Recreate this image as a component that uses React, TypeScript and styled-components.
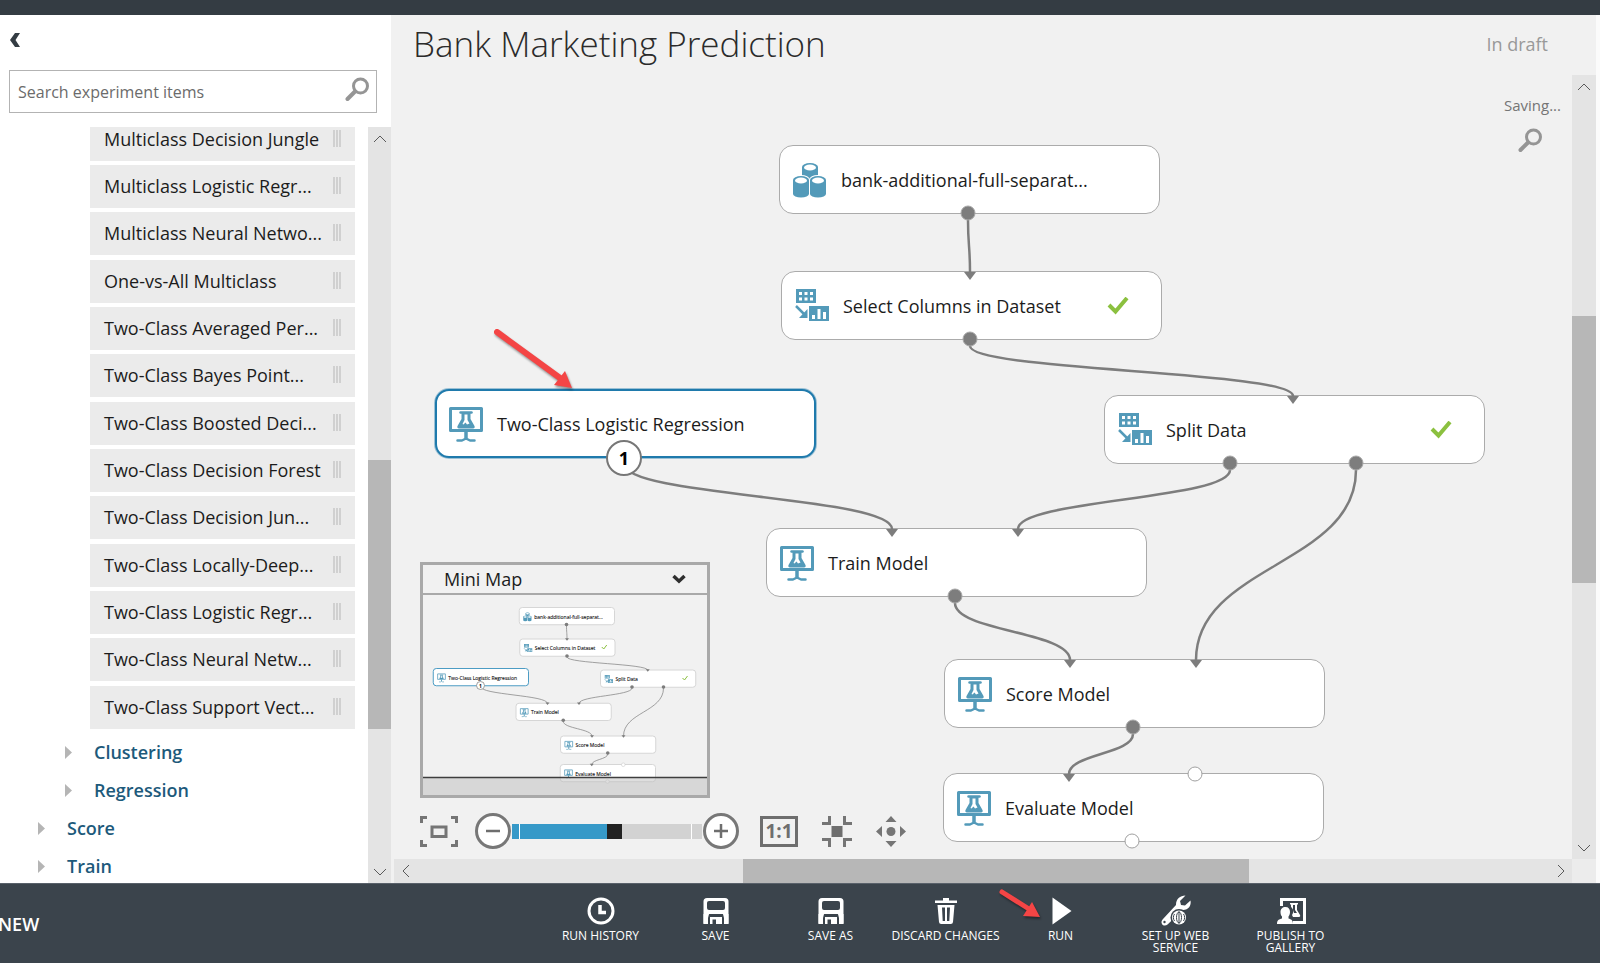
import React, { useState } from "react";
import styled, { createGlobalStyle, css } from "styled-components";

const GlobalStyle = createGlobalStyle`
  *, *::before, *::after { box-sizing: border-box; }
  body {
    margin: 0;
    background: #ffffff;
    color: #1c1c1c;
    font-family: "Open Sans", "Noto Sans", sans-serif;
    font-size: 18px;
  }
  button { font: inherit; color: inherit; background: none; border: 0; padding: 0; cursor: pointer; }
  ul { list-style: none; margin: 0; padding: 0; }
  svg { display: block; flex: none; }
`;

const BLUE = "#539ab9";
const GREY = "#7d7d7d";

/* ---------- data ---------- */

const MODULES = [
  "Multiclass Decision Jungle",
  "Multiclass Logistic Regr...",
  "Multiclass Neural Netwo...",
  "One-vs-All Multiclass",
  "Two-Class Averaged Per...",
  "Two-Class Bayes Point...",
  "Two-Class Boosted Deci...",
  "Two-Class Decision Forest",
  "Two-Class Decision Jun...",
  "Two-Class Locally-Deep...",
  "Two-Class Logistic Regr...",
  "Two-Class Neural Netw...",
  "Two-Class Support Vect...",
];

const CATEGORIES = [
  { name: "Clustering", depth: 1 },
  { name: "Regression", depth: 1 },
  { name: "Score", depth: 0 },
  { name: "Train", depth: 0 },
];

type IconKind = "data" | "transform" | "model";

interface GraphNode {
  id: string;
  label: string;
  icon: IconKind;
  x: number;
  y: number;
  done?: boolean;
  selected?: boolean;
}

const NODE_W = 381;
const NODE_H = 69;

const NODES: GraphNode[] = [
  { id: "bank", label: "bank-additional-full-separat...", icon: "data", x: 385, y: 70 },
  { id: "select", label: "Select Columns in Dataset", icon: "transform", x: 387, y: 196, done: true },
  { id: "logistic", label: "Two-Class Logistic Regression", icon: "model", x: 41, y: 314, selected: true },
  { id: "split", label: "Split Data", icon: "transform", x: 710, y: 320, done: true },
  { id: "train", label: "Train Model", icon: "model", x: 372, y: 453 },
  { id: "score", label: "Score Model", icon: "model", x: 550, y: 584 },
  { id: "evaluate", label: "Evaluate Model", icon: "model", x: 549, y: 698 },
];

type Point = [number, number];

const at = (id: string, side: "in" | "out", offset: number): Point => {
  const n = NODES.find((m) => m.id === id)!;
  return [n.x + offset, side === "in" ? n.y + 1 : n.y + NODE_H - 1];
};

const EDGES: [Point, Point][] = [
  [at("bank", "out", 189), at("select", "in", 189)],
  [at("select", "out", 189), at("split", "in", 189)],
  [at("logistic", "out", 189), at("train", "in", 126)],
  [at("split", "out", 126), at("train", "in", 252)],
  [at("split", "out", 252), at("score", "in", 252)],
  [at("train", "out", 189), at("score", "in", 126)],
  [at("score", "out", 189), at("evaluate", "in", 126)],
];

const OPEN_PORTS: Point[] = [at("evaluate", "in", 252), at("evaluate", "out", 189)];

const edgePath = ([[x1, y1], [x2, y2]]: [Point, Point], lead = 7) => {
  const start = y1 + lead;
  const mid = (start + y2) / 2;
  return `M${x1} ${y1}V${start}C${x1} ${mid} ${x2} ${mid} ${x2} ${y2}`;
};

/* ---------- icons ---------- */

const DataShapes = () => (
  <g>
    {[
      [9, 0],
      [0, 13],
      [17, 13],
    ].map(([x, y]) => (
      <g key={`${x}-${y}`}>
        <path
          d={`M${x} ${y + 4}a8 4 0 0 1 16 0v14a8 3.500 0 0 1-16 0z`}
          fill={BLUE}
          stroke="#fff"
          strokeWidth="2"
          paintOrder="stroke"
        />
        <ellipse cx={x + 8} cy={y + 4.5} rx="6" ry="3" fill="#fff" />
      </g>
    ))}
  </g>
);

const TransformShapes = () => (
  <g>
    <path d="M1 0h20v14H1z" fill={BLUE} />
    <path d="M4 3h3v3H4zM9.500 3h3v3h-3zM15 3h3v3h-3zM4 8.500h3v3H4zM9.500 8.500h3v3h-3zM15 8.500h3v3h-3z" fill="#fff" />
    <path d="M14 17h20v15H14z" fill={BLUE} />
    <path d="M17 26h3v4h-3zM22.500 20h3v10h-3zM28 23h3v7h-3z" fill="#fff" />
    <path d="M1 17l9 9" stroke={BLUE} strokeWidth="2.500" />
    <path d="M12.500 20v9H4z" fill={BLUE} />
  </g>
);

const ModelShapes = () => (
  <g>
    <path d="M1.500 1.500h31v22h-31z" fill="#fff" stroke={BLUE} strokeWidth="3" strokeLinejoin="round" />
    <path d="M11.500 5.500h11" stroke={BLUE} strokeWidth="2.500" strokeLinecap="round" />
    <path d="M12.500 6h9v6l4 7c.5 1.500 0 2.500-1.500 2.500H10c-1.500 0-2-1-1.500-2.500l4-7z" fill={BLUE} />
    <path d="M15.500 7.500h3V13l2 3.500-2.500 1-1.500-2-2 2-1-.5 2-4z" fill="#fff" />
    <path d="M17 24v7" stroke={BLUE} strokeWidth="3.500" />
    <path d="M8.500 33.500h4.500l4-2 4 2h4.500" fill="none" stroke={BLUE} strokeWidth="2.500" strokeLinecap="round" strokeLinejoin="round" />
  </g>
);

const SHAPES: Record<IconKind, React.FC> = {
  data: DataShapes,
  transform: TransformShapes,
  model: ModelShapes,
};

const Magnifier = () => (
  <svg width="25" height="25" viewBox="0 0 25 25" fill="none" stroke="#959595" aria-hidden="true">
    <circle cx="15.500" cy="9" r="7" strokeWidth="3" />
    <path d="M10 14.500L2.500 22" strokeWidth="4" strokeLinecap="round" />
  </svg>
);

const Chevron = ({ d }: { d: string }) => (
  <svg width="14" height="14" viewBox="0 0 14 14" fill="none" stroke="#5a5a5a" strokeWidth="1" aria-hidden="true">
    <path d={d} />
  </svg>
);

const ARROWS = {
  up: "M1 10l6-6 6 6",
  down: "M1 4l6 6 6-6",
  left: "M10 1L4 7l6 6",
  right: "M4 1l6 6-6 6",
};

const CheckMark = () => (
  <svg width="22" height="19" viewBox="0 0 22 19" fill="none" stroke="#8bc03f" strokeWidth="4" aria-label="Completed">
    <path d="M2 8l6.500 6.500L20 1" />
  </svg>
);

const Grip = () => (
  <svg width="8" height="17" viewBox="0 0 8 17" fill="#d0d0d0" aria-hidden="true">
    <path d="M0 0h2v17H0zM3 0h2v17H3zM6 0h2v17H6z" />
  </svg>
);

/* ---------- scrollbars ---------- */

const BarTrack = styled.div<{ $horizontal?: boolean }>`
  display: flex;
  flex-direction: ${(p) => (p.$horizontal ? "row" : "column")};
  flex: none;
  min-width: 23px;
  min-height: 23px;
  background: #e4e4e4;
`;

const BarButton = styled.button`
  display: flex;
  flex: 0 0 23px;
  align-items: center;
  justify-content: center;
`;

const BarPart = styled.div<{ $share: number; $thumb?: boolean }>`
  flex: ${(p) => p.$share} 1 0;
  background: ${(p) => (p.$thumb ? "#b7b7b7" : "transparent")};
`;

interface ScrollBarProps {
  horizontal?: boolean;
  before: number;
  size: number;
  after: number;
}

const ScrollBar = ({ horizontal, before, size, after }: ScrollBarProps) => (
  <BarTrack $horizontal={horizontal}>
    <BarButton type="button" aria-label={horizontal ? "Scroll left" : "Scroll up"}>
      <Chevron d={horizontal ? ARROWS.left : ARROWS.up} />
    </BarButton>
    <BarPart $share={before} />
    <BarPart $share={size} $thumb />
    <BarPart $share={after} />
    <BarButton type="button" aria-label={horizontal ? "Scroll right" : "Scroll down"}>
      <Chevron d={horizontal ? ARROWS.right : ARROWS.down} />
    </BarButton>
  </BarTrack>
);

/* ---------- page frame ---------- */

const Page = styled.div`
  display: grid;
  grid-template: 15px minmax(0, 1fr) 80px / 391px minmax(0, 1fr);
  height: 100vh;
  overflow: hidden;
`;

const TopBar = styled.header`
  grid-column: 1 / -1;
  background: #343c43;
`;

/* ---------- sidebar ---------- */

const Sidebar = styled.aside`
  display: flex;
  flex-direction: column;
  min-height: 0;
  background: #ffffff;
`;

const CollapseButton = styled.button`
  align-self: flex-start;
  display: flex;
  align-items: center;
  height: 49px;
  margin: 0 0 6px 9px;
`;

const SearchBox = styled.label`
  display: flex;
  align-items: center;
  height: 43px;
  margin: 0 14px 14px 9px;
  padding: 0 6px 4px 8px;
  border: 1px solid #b3b3b3;
`;

const SearchInput = styled.input`
  flex: 1;
  min-width: 0;
  padding: 4px 0 0;
  border: 0;
  outline: 0;
  background: none;
  font: inherit;
  font-size: 16px;
  color: #333333;
  &::placeholder { color: #6b6b6b; opacity: 1; }
`;

const TreeArea = styled.div`
  display: flex;
  flex: 1;
  min-height: 0;
`;

const Tree = styled.nav`
  flex: 1;
  min-width: 0;
  overflow: hidden;
`;

const ModuleList = styled.ul`
  margin: -9px 13px 3px 90px;
`;

const ModuleItem = styled.li`
  display: flex;
  align-items: center;
  justify-content: space-between;
  height: 43px;
  margin-bottom: 4px;
  padding: 0 14px 2px;
  background: #ebebeb;
  white-space: nowrap;
  &:nth-child(3n) { margin-bottom: 5px; }
`;

const CategoryButton = styled.button<{ $depth: number }>`
  display: flex;
  align-items: center;
  gap: 22px;
  height: 38px;
  padding-left: ${(p) => 38 + p.$depth * 27}px;
  color: #1d5a7b;
  font-weight: 600;
`;

/* ---------- workspace ---------- */

const Workspace = styled.main`
  display: grid;
  grid-template: 60px minmax(0, 1fr) 24px / minmax(0, 1fr) 24px;
  min-height: 0;
  padding-left: 3px;
  border-right: 4px solid #fbfbfb;
  background: #f1f1f1;
`;

const TitleRow = styled.div`
  grid-column: 1 / -1;
  display: flex;
  align-items: center;
  justify-content: space-between;
  padding: 0 48px 3px 19px;
`;

const Title = styled.h1`
  margin: 0;
  font-size: 35px;
  line-height: 48px;
  font-weight: 300;
  color: #2b2b2b;
`;

const Status = styled.span`
  color: #999999;
`;

const Canvas = styled.section`
  position: relative;
  overflow: hidden;
`;

const Corner = styled.div`
  background: #ececec;
`;

const EdgeLayer = styled.svg`
  position: absolute;
  inset: 0;
  width: 100%;
  height: 100%;
  pointer-events: none;
`;

const NodeBox = styled.div<{ $x: number; $y: number; $selected?: boolean }>`
  position: absolute;
  left: ${(p) => p.$x}px;
  top: ${(p) => p.$y}px;
  display: flex;
  align-items: center;
  width: ${NODE_W}px;
  height: ${NODE_H}px;
  padding: 2px 32px 0 13px;
  border: 1px solid #ababab;
  border-radius: 14px;
  background: #ffffff;
  white-space: nowrap;
  ${(p) =>
    p.$selected &&
    css`
      border: 2px solid #1f7aac;
      padding-left: 12px;
      box-shadow: 0 0 0 1px #1f7aac66;
    `}
`;

const NodeLabel = styled.span`
  flex: 1;
  margin: 0 0 2px 13px;
`;

const BadgeAnchor = styled.div<{ $x: number; $y: number }>`
  position: absolute;
  left: ${(p) => p.$x + 189}px;
  top: ${(p) => p.$y + NODE_H}px;
`;

const PortBadge = styled.span`
  display: flex;
  align-items: center;
  justify-content: center;
  width: 36px;
  height: 36px;
  margin: -18px;
  border: 2px solid #777777;
  border-radius: 50%;
  background: #ffffff;
  color: #000000;
  font-weight: 700;
`;

const Saving = styled.div`
  position: absolute;
  top: 19px;
  right: 11px;
  display: flex;
  flex-direction: column;
  align-items: flex-start;
  gap: 12px;
  font-size: 15px;
  line-height: 22px;
  color: #757575;
  svg { margin-left: 14px; }
`;

const Callout = styled.svg<{ $x: number; $y: number }>`
  position: absolute;
  left: ${(p) => p.$x}px;
  top: ${(p) => p.$y}px;
  overflow: visible;
  filter: drop-shadow(1px 2px 1px #00000066);
  pointer-events: none;
`;

/* ---------- mini map and zoom tools ---------- */

const CanvasTools = styled.div`
  position: absolute;
  left: 26px;
  bottom: 10px;
  display: flex;
  flex-direction: column;
  align-items: flex-start;
  gap: 15px;
`;

const MiniMapPanel = styled.section`
  width: 290px;
  border: 3px solid #a9a9a9;
  background: #f1f1f1;
`;

const MiniMapHeader = styled.header`
  display: flex;
  align-items: center;
  justify-content: space-between;
  height: 30px;
  padding: 0 21px 0 21px;
  border-bottom: 2px solid #a9a9a9;
`;

const MiniMapTitle = styled.h2`
  margin: 0;
  font-size: 18px;
  line-height: 26px;
  font-weight: 400;
`;

const ZoomBar = styled.div`
  display: flex;
  align-items: center;
  height: 36px;
`;

const RoundButton = styled.button<{ $gap?: number }>`
  display: flex;
  align-items: center;
  justify-content: center;
  width: 36px;
  height: 36px;
  margin-left: ${(p) => p.$gap ?? 0}px;
  border: 3px solid #777777;
  border-radius: 50%;
  background: #ffffff;
`;

const ToolButton = styled.button`
  margin-left: 24px;
`;

const ActualSize = styled.button`
  width: 38px;
  height: 31px;
  margin-left: 21px;
  border: 3px solid #6e6e6e;
  color: #6e6e6e;
  font-size: 19px;
  line-height: 24px;
  font-weight: 700;
`;

const sliderTrack = css`
  height: 15px;
  background:
    linear-gradient(#fff, #fff) 7px 0 / 1px 15px no-repeat,
    linear-gradient(#fff, #fff) calc(100% - 10px) 0 / 1px 15px no-repeat,
    linear-gradient(to right, #3699c8 54%, #d2d2d2 54%);
`;

const sliderThumb = css`
  width: 15px;
  height: 15px;
  border: 0;
  border-radius: 0;
  background: #222222;
`;

const ZoomSlider = styled.input`
  appearance: none;
  width: 190px;
  height: 15px;
  margin: 0 1px;
  background: none;
  &::-webkit-slider-runnable-track { ${sliderTrack} }
  &::-moz-range-track { ${sliderTrack} }
  &::-webkit-slider-thumb { appearance: none; ${sliderThumb} }
  &::-moz-range-thumb { ${sliderThumb} }
`;

const MAP_SCALE = 0.25;
const mapPoint = ([x, y]: Point): Point => [x * MAP_SCALE, y * MAP_SCALE - 5];

const MiniMap = () => (
  <MiniMapPanel aria-label="Mini Map">
    <MiniMapHeader>
      <MiniMapTitle>Mini Map</MiniMapTitle>
      <button type="button" aria-label="Collapse mini map">
        <svg width="14" height="10" viewBox="0 0 14 10" fill="none" stroke="#2f2f2f" strokeWidth="3.500">
          <path d="M1.500 2L7 7.200 12.500 2" />
        </svg>
      </button>
    </MiniMapHeader>
    <svg width="284" height="200" viewBox="0 0 284 200" role="img" aria-label="Overview of the experiment">
      {NODES.map((n) => {
        const [x, y] = mapPoint([n.x, n.y]);
        const Shapes = SHAPES[n.icon];
        return (
          <g key={n.id}>
            <rect
              x={x}
              y={y}
              width={NODE_W * MAP_SCALE}
              height={NODE_H * MAP_SCALE}
              rx="3"
              fill="#fff"
              stroke={n.selected ? "#4c9cc4" : "#d6d6d6"}
            />
            <g transform={`translate(${x + 4} ${y + 5}) scale(.25)`}>
              <Shapes />
            </g>
            <text x={x + 15} y={y + 11} fontSize="5" fill="#111" stroke="#111" strokeWidth=".1">
              {n.label}
            </text>
            {n.done && (
              <path d={`M${x + 82} ${y + 8}l2 2 3-4`} fill="none" stroke="#8bc03f" strokeWidth="1" />
            )}
          </g>
        );
      })}
      {EDGES.map(([from, to], i) => {
        const a = mapPoint(from);
        const b = mapPoint(to);
        return (
          <g key={i}>
            <path d={edgePath([a, b], 1)} fill="none" stroke="#8a8a8a" strokeWidth=".8" />
            <circle cx={a[0]} cy={a[1]} r="1.800" fill={GREY} />
            <path d={`M${b[0] - 2} ${b[1] - 1}h4l-2 2.500z`} fill={GREY} />
          </g>
        );
      })}
      {OPEN_PORTS.map((p, i) => {
        const [x, y] = mapPoint(p);
        return <circle key={i} cx={x} cy={y} r="1.800" fill="#fff" stroke="#ccc" strokeWidth=".6" />;
      })}
      <circle cx="57.500" cy="90.500" r="4" fill="#fff" stroke="#888" strokeWidth=".8" />
      <text x="57.500" y="92.500" fontSize="5" fontWeight="700" textAnchor="middle">
        1
      </text>
      <path d="M0 183h284v17H0z" fill="#bdbdbd" opacity=".5" />
      <path d="M0 182.500h284" stroke="#3e3e3e" strokeWidth="1.500" />
    </svg>
  </MiniMapPanel>
);

const ZoomTools = () => {
  const [zoom, setZoom] = useState(54);
  return (
    <ZoomBar>
      <button type="button" aria-label="Zoom to fit">
        <svg width="38" height="31" viewBox="0 0 38 31" fill="none" stroke="#757575">
          <path d="M1.500 7V1.500H7M31 1.500h5.500V7M36.500 24v5.500H31M7 29.500H1.500V24" strokeWidth="3" />
          <path d="M12 11h14v9.500H12z" strokeWidth="3" />
        </svg>
      </button>
      <RoundButton type="button" aria-label="Zoom out" $gap={17}>
        <svg width="14" height="14" viewBox="0 0 14 14" stroke="#6e6e6e" strokeWidth="2.500">
          <path d="M0 7h14" />
        </svg>
      </RoundButton>
      <ZoomSlider
        type="range"
        min="0"
        max="100"
        aria-label="Zoom level"
        value={zoom}
        onChange={(e) => setZoom(Number(e.target.value))}
      />
      <RoundButton type="button" aria-label="Zoom in">
        <svg width="14" height="14" viewBox="0 0 14 14" stroke="#6e6e6e" strokeWidth="2.500">
          <path d="M0 7h14M7 0v14" />
        </svg>
      </RoundButton>
      <ActualSize type="button">1:1</ActualSize>
      <ToolButton type="button" aria-label="Center on canvas">
        <svg width="30" height="31" viewBox="0 0 30 31" fill="none" stroke="#757575" strokeWidth="3">
          <path d="M7.500 0v7.500H0M22.500 0v7.500H30M0 23.500h7.500V31M30 23.500h-7.500V31" />
          <path d="M9.500 10h11v11h-11z" fill="#6e6e6e" stroke="none" />
        </svg>
      </ToolButton>
      <ToolButton type="button" aria-label="Pan">
        <svg width="30" height="31" viewBox="0 0 30 31" fill="#757575">
          <path d="M9.500 6L15 0l5.500 6zM9.500 25L15 31l5.500-6zM6 10L0 15.500 6 21zM24 10l6 5.500-6 5.500z" />
          <circle cx="15" cy="15.500" r="4.500" />
        </svg>
      </ToolButton>
    </ZoomBar>
  );
};

/* ---------- command bar ---------- */

const CommandBar = styled.footer`
  grid-column: 1 / -1;
  display: flex;
  border-top: 1px solid #59616a;
  background: #3b444c;
  color: #ffffff;
`;

const NewButton = styled.button`
  flex: 0 1 545px;
  margin-left: -2px;
  text-align: left;
  font-weight: 600;
`;

const Command = styled.button`
  position: relative;
  display: flex;
  flex: 0 0 115px;
  flex-direction: column;
  align-items: center;
  gap: 5px;
  padding-top: 13px;
  font-size: 12px;
  line-height: 12px;
`;

const CommandText = styled.span<{ $narrow?: boolean }>`
  max-width: ${(p) => (p.$narrow ? "80px" : "none")};
  white-space: ${(p) => (p.$narrow ? "normal" : "nowrap")};
`;

const CommandIcon = ({ children }: { children: React.ReactNode }) => (
  <svg width="32" height="28" viewBox="0 0 32 28" fill="#fff" overflow="visible" aria-hidden="true">
    {children}
  </svg>
);

const Disk = () => (
  <CommandIcon>
    <path
      fillRule="evenodd"
      d="M7 1h18q3.500 0 3.500 3.500V27H25v-7.500Q25 17 22.500 17h-13Q7 17 7 19.500V27H3.500V4.500Q3.500 1 7 1zM9 4Q7 4 7 6v5q0 2 2 2h14q2 0 2-2V6q0-2-2-2z"
    />
    <path d="M3.500 17H9l-1 4v6H4.500q-1 0-1-1zM28.500 17H23l1 4v6h3.500q1 0 1-1z" />
    <path fillRule="evenodd" d="M10 20h12v7H10zM12.500 22.500V27H16v-4.500z" />
  </CommandIcon>
);

const COMMANDS: { text: string; narrow?: boolean; icon: React.ReactNode; marked?: boolean }[] = [
  {
    text: "RUN HISTORY",
    icon: (
      <CommandIcon>
        <circle cx="16" cy="14" r="12" fill="none" stroke="#fff" strokeWidth="3" />
        <path d="M15 8v7.500h6" fill="none" stroke="#fff" strokeWidth="3.500" />
      </CommandIcon>
    ),
  },
  { text: "SAVE", icon: <Disk /> },
  { text: "SAVE AS", icon: <Disk /> },
  {
    text: "DISCARD CHANGES",
    icon: (
      <CommandIcon>
        <path d="M13 1h6v2.500h-6zM5 3.500h22V6H5z" />
        <path fillRule="evenodd" d="M7.500 8h17l-1.500 17q-.2 2-2.200 2h-9.600q-2 0-2.200-2zM12 10.500l.7 13.500h2.300V10.500zM17 10.500V24h2.300l.7-13.500z" />
      </CommandIcon>
    ),
  },
  {
    text: "RUN",
    marked: true,
    icon: (
      <CommandIcon>
        <path d="M7.500 0.500L26.500 14 7.500 27.500z" />
      </CommandIcon>
    ),
  },
  {
    text: "SET UP WEB SERVICE",
    narrow: true,
    icon: (
      <CommandIcon>
        <path d="M25.500-1.500l-5.500 5.500 1 4 4 .5 5.500-5c1 5-2 9.500-7.500 9.500L7.500 27.500c-1.500 1.500-4.500 1.500-5.500-.5-1-1.500-.5-3.500 1-5L16 8c0-6 4-9.500 9.500-9.500z" />
        <circle cx="4.500" cy="25" r="1.200" fill="#3b444c" />
        <circle cx="19" cy="20.500" r="8.500" fill="#3b444c" />
        <circle cx="19" cy="20.500" r="7" />
        <g fill="none" stroke="#3b444c">
          <ellipse cx="19" cy="20.500" rx="2.500" ry="5.500" />
          <path d="M19 14.500v12M14.500 17c-1.500 2-1.500 5 0 7M23.500 17c1.500 2 1.500 5 0 7" />
        </g>
      </CommandIcon>
    ),
  },
  {
    text: "PUBLISH TO GALLERY",
    narrow: true,
    icon: (
      <CommandIcon>
        <path d="M5 1h26v26H18v-3h10V4H8v5H5z" />
        <path d="M15 6h8v1.500h-1V13l3 5c.5 1.200 0 2-1 2h-6l-1-2c2-3 1.500-6-1-8V7.500h-1z" />
        <path d="M18 8h2v5l2 3h-3l-1-3z" fill="#3b444c" />
        <path d="M10.500 10c3 0 4.500 2 4.500 5 0 2-.8 3.500-1.500 4.500v2c2.500.8 4.500 1.500 4.500 5.500H2c0-4 2-4.700 5-5.500v-2C6 18.500 5.500 17 5.500 15c0-3 2-5 5-5z" />
      </CommandIcon>
    ),
  },
];

/* ---------- application ---------- */

export default function App() {
  const [query, setQuery] = useState("");
  const selected = NODES.find((n) => n.selected)!;
  return (
    <>
      <GlobalStyle />
      <Page>
        <TopBar />

        <Sidebar>
          <CollapseButton type="button" aria-label="Collapse panel">
            <svg width="11" height="14" viewBox="0 0 11 14" fill="#343c43">
              <path d="M6 0h5L6.500 7l4.500 7H6L1 7z" />
            </svg>
          </CollapseButton>
          <SearchBox>
            <SearchInput
              type="text"
              aria-label="Search experiment items"
              placeholder="Search experiment items"
              value={query}
              onChange={(e) => setQuery(e.target.value)}
            />
            <Magnifier />
          </SearchBox>
          <TreeArea>
            <Tree aria-label="Experiment items">
              <ModuleList>
                {MODULES.map((name) => (
                  <ModuleItem key={name}>
                    <span>{name}</span>
                    <Grip />
                  </ModuleItem>
                ))}
              </ModuleList>
              {CATEGORIES.map((c) => (
                <CategoryButton key={c.name} type="button" $depth={c.depth}>
                  <svg width="7" height="13" viewBox="0 0 7 13" fill="#b5b5b5" aria-hidden="true">
                    <path d="M0 0l7 6.500L0 13z" />
                  </svg>
                  {c.name}
                </CategoryButton>
              ))}
            </Tree>
            <ScrollBar before={310} size={268} after={131} />
          </TreeArea>
        </Sidebar>

        <Workspace>
          <TitleRow>
            <Title>Bank Marketing Prediction</Title>
            <Status>In draft</Status>
          </TitleRow>

          <Canvas aria-label="Experiment canvas">
            {NODES.map((n) => {
              const Shapes = SHAPES[n.icon];
              return (
                <NodeBox key={n.id} $x={n.x} $y={n.y} $selected={n.selected}>
                  <svg width="35" height="36" viewBox="0 0 35 36" aria-hidden="true">
                    <Shapes />
                  </svg>
                  <NodeLabel>{n.label}</NodeLabel>
                  {n.done && <CheckMark />}
                </NodeBox>
              );
            })}
            <EdgeLayer aria-hidden="true">
              {EDGES.map(([from, to], i) => (
                <g key={i}>
                  <path d={edgePath([from, to])} fill="none" stroke={GREY} strokeWidth="2.500" />
                  <circle cx={from[0]} cy={from[1]} r="7" fill={GREY} stroke="#a8a8a8" />
                  <path d={`M${to[0] - 6} ${to[1]}h12l-6 8z`} fill={GREY} />
                </g>
              ))}
              {OPEN_PORTS.map(([x, y]) => (
                <circle key={`${x}-${y}`} cx={x} cy={y} r="7" fill="#fff" stroke="#a0a0a0" />
              ))}
            </EdgeLayer>
            <BadgeAnchor $x={selected.x} $y={selected.y}>
              <PortBadge>1</PortBadge>
            </BadgeAnchor>
            <Saving>
              <span>Saving...</span>
              <Magnifier />
            </Saving>
            <CanvasTools>
              <MiniMap />
              <ZoomTools />
            </CanvasTools>
            <Callout $x={100} $y={254} width="78" height="59" viewBox="0 0 78 59" fill="#f44545" aria-hidden="true">
              <path d="M3 3L66 49" stroke="#f44545" strokeWidth="6" strokeLinecap="round" />
              <path d="M78 59l-18-3 11-14z" />
            </Callout>
          </Canvas>

          <ScrollBar before={218} size={267} after={253} />
          <ScrollBar horizontal before={326} size={506} after={300} />
          <Corner />
        </Workspace>

        <CommandBar>
          <NewButton type="button">NEW</NewButton>
          {COMMANDS.map((c) => (
            <Command key={c.text} type="button">
              {c.icon}
              <CommandText $narrow={c.narrow}>{c.text}</CommandText>
              {c.marked && (
                <Callout $x={-4} $y={5} width="41" height="29" viewBox="0 0 41 29" fill="#f44545" aria-hidden="true">
                  <path d="M3 3l27 17" stroke="#f44545" strokeWidth="5" strokeLinecap="round" />
                  <path d="M41 28l-17-1 9-14z" />
                </Callout>
              )}
            </Command>
          ))}
        </CommandBar>
      </Page>
    </>
  );
}
